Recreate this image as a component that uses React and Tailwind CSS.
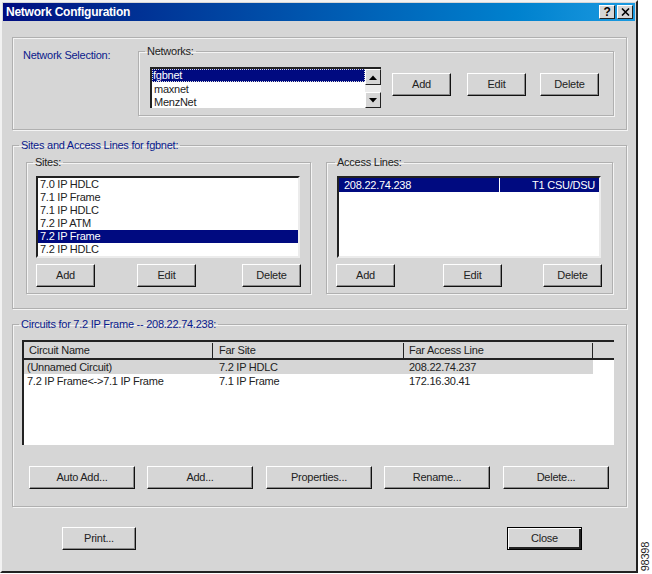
const FONT = "font-['Liberation_Sans',Arial,sans-serif]";

function Btn({ label, w = "w-[59px]", def = false, className = "" }) {
  return (
    <button
      className={`${w} h-[23px] shrink-0 bg-[#d6d6d6] text-[11px] leading-none text-[#222] border ${
        def
          ? "border-black shadow-[inset_1px_1px_0_#fff,inset_-2px_-2px_0_#222]"
          : "border-t-white border-l-white border-r-[#111] border-b-[#111] shadow-[inset_-1px_-1px_0_#8a8a8a]"
      } ${className}`}
    >
      {label}
    </button>
  );
}

function Group({ title, blue = false, legend = "ml-[7px]", className = "", children }) {
  return (
    <fieldset
      className={`border border-[#b0b0b0] shadow-[1px_1px_0_#f4f4f4,inset_1px_1px_0_#f4f4f4] ${className}`}
    >
      <legend
        className={`${legend} px-[2px] text-[11px] leading-[14px] ${blue ? "text-[#0a1a8c]" : "text-[#222]"}`}
      >
        {title}
      </legend>
      {children}
    </fieldset>
  );
}

function Row({ text, selected = false, className = "" }) {
  return (
    <div
      className={`h-[13px] leading-[13px] px-[2px] text-[11px] ${
        selected ? "bg-[#000a80] text-white" : "text-[#222]"
      } ${className}`}
    >
      {text}
    </div>
  );
}

const sunken =
  "bg-white border-t-2 border-l-2 border-t-[#222] border-l-[#222] border-r-2 border-b-2 border-r-[#ececec] border-b-[#ececec]";

function ScrollArrow({ up }) {
  return (
    <div className="w-[16px] h-[16px] bg-[#d6d6d6] border border-t-white border-l-white border-r-[#222] border-b-[#222] flex items-center justify-center">
      <svg width="8" height="5" viewBox="0 0 8 5">
        <path d={up ? "M0 5 L4 0.5 L8 5 Z" : "M0 0 L4 4.5 L8 0 Z"} fill="#000" />
      </svg>
    </div>
  );
}

const columns = [
  ["Circuit Name", "w-[189px] pl-[5px]"],
  ["Far Site", "w-[191px] pl-[6px]"],
  ["Far Access Line", "w-[189px] pl-[5px]"],
];

const circuits = [
  ["(Unnamed Circuit)", "7.2 IP HDLC", "208.22.74.237"],
  ["7.2 IP Frame<->7.1 IP Frame", "7.1 IP Frame", "172.16.30.41"],
];

export default function App() {
  return (
    <div className={`${FONT} tracking-[-0.25px] w-[652px] h-[574px] bg-white flex`}>
      <div className="w-[638px] h-[573px] shrink-0 bg-[#d6d6d6] border-l-[2px] border-t-[2px] border-l-[#f2f2f2] border-t-[#f2f2f2] border-r-[2px] border-b-[2px] border-r-[#222] border-b-[#222] flex flex-col">
        <div className="mx-px mt-px h-[18px] shrink-0 bg-gradient-to-r from-[#000a80] to-[#1a9ae0] flex items-center pl-[3px] pr-[2px]">
          <span className="flex-1 text-white font-bold text-[12px] leading-none">Network Configuration</span>
          <div className="w-[16px] h-[14px] mr-[2px] bg-[#d6d6d6] border border-t-white border-l-white border-r-[#222] border-b-[#222] flex items-center justify-center font-bold text-[12px] leading-none text-black">?</div>
          <div className="w-[16px] h-[14px] bg-[#d6d6d6] border border-t-white border-l-white border-r-[#222] border-b-[#222] flex items-center justify-center">
            <svg width="9" height="8" viewBox="0 0 9 8">
              <path d="M1 0.5 L8 7.5 M8 0.5 L1 7.5" stroke="#000" strokeWidth="1.6" />
            </svg>
          </div>
        </div>

        <div className="flex-1 flex flex-col pl-[10px] pr-[9px]">
          {/* Network selection */}
          <div className="mt-[16px] h-[93px] border border-[#b0b0b0] shadow-[1px_1px_0_#f4f4f4,inset_1px_1px_0_#f4f4f4] flex">
            <div className="w-[125px] shrink-0 pl-[10px] pt-[10px] text-[11px] leading-[14px] text-[#0a1a8c]">Network Selection:</div>
            <Group title="Networks:" legend="-ml-[5px]" className="w-[476px] h-[72px] mt-[6px] pl-[11px] pr-[12px]">
              <div className="flex items-start mt-[9px]">
                <div className="w-[231px] h-[41px] shrink-0 border-l-2 border-t-2 border-l-[#222] border-t-[#222] bg-white flex">
                  <div className="flex-1 min-w-0">
                    <div className="h-[13px] leading-[12px] px-[1px] text-[11px] bg-[#000a80] text-white outline-1 -outline-offset-1 outline-dotted outline-[#ddd]">fgbnet</div>
                    <Row text="maxnet" className="mt-[1px]" />
                    <Row text="MenzNet" />
                  </div>
                  <div className="w-[16px] shrink-0 bg-[#ececec] flex flex-col justify-between">
                    <ScrollArrow up />
                    <ScrollArrow />
                  </div>
                </div>
                <div className="flex ml-[11px] mt-[6px]">
                  <Btn label="Add" />
                  <Btn label="Edit" className="ml-[16px]" />
                  <Btn label="Delete" className="ml-[14px]" />
                </div>
              </div>
            </Group>
          </div>

          {/* Sites and access lines */}
          <Group title="Sites and Access Lines for fgbnet:" blue legend="ml-[6px]" className="mt-[8px] h-[171px] flex">
            <div className="flex pl-[13px] pt-[3px]">
              <Group title="Sites:" legend="-ml-[3px]" className="w-[285px] h-[139px] pl-[9px] pr-[9px]">
                <div className={`${sunken} w-[264px] h-[82px] mt-[7px] overflow-hidden`}>
                  <Row text="7.0 IP HDLC" />
                  <Row text="7.1 IP Frame" />
                  <Row text="7.1 IP HDLC" />
                  <Row text="7.2 IP ATM" />
                  <Row text="7.2 IP Frame" selected />
                  <Row text="7.2 IP HDLC" />
                </div>
                <div className="flex mt-[6px]">
                  <Btn label="Add" />
                  <Btn label="Edit" className="ml-[42px]" />
                  <Btn label="Delete" className="ml-[46px]" />
                </div>
              </Group>
              <Group title="Access Lines:" legend="-ml-[2px]" className="w-[287px] h-[139px] ml-[15px] pl-[10px] pr-[9px]">
                <div className={`${sunken} w-[264px] h-[82px] mt-[7px]`}>
                  <div className="h-[14px] leading-[14px] text-[11px] bg-[#000a80] text-white flex pl-[5px] pr-[4px]">
                    <span className="w-[156px] border-r border-r-white">208.22.74.238</span>
                    <span className="flex-1 text-right">T1 CSU/DSU</span>
                  </div>
                </div>
                <div className="flex -ml-px mt-[6px]">
                  <Btn label="Add" />
                  <Btn label="Edit" className="ml-[48px]" />
                  <Btn label="Delete" className="ml-[41px]" />
                </div>
              </Group>
            </div>
          </Group>

          {/* Circuits */}
          <Group title="Circuits for 7.2 IP Frame -- 208.22.74.238:" blue legend="-ml-[3px]" className="mt-[8px] h-[190px] pl-[9px]">
            <div className="w-[592px] h-[105px] mt-[9px] bg-white border-l-2 border-l-[#222] border-t-2 border-t-[#222] flex flex-col">
              <div className="h-[18px] shrink-0 bg-[#d6d6d6] border-b-2 border-b-[#222] flex text-[11px] leading-[15px] text-[#222] pt-px">
                {columns.map(([name, w]) => (
                  <div key={name} className={`${w} border-r border-r-[#222]`}>{name}</div>
                ))}
                <div className="flex-1" />
              </div>
              <div>
                {circuits.map((c, i) => (
                  <div key={c[0]} className={`w-[569px] h-[14px] flex text-[11px] leading-[14px] text-[#222] ${i === 0 ? "bg-[#d6d6d6]" : ""}`}>
                    <span className="w-[189px] pl-[3px]">{c[0]}</span>
                    <span className="w-[191px] pl-[6px]">{c[1]}</span>
                    <span className="w-[189px] pl-[5px]">{c[2]}</span>
                  </div>
                ))}
              </div>
            </div>
            <div className="flex ml-[7px] mt-[21px]">
              <Btn label="Auto Add..." w="w-[106px]" />
              <Btn label="Add..." w="w-[106px]" className="ml-[12px]" />
              <Btn label="Properties..." w="w-[106px]" className="ml-[13px]" />
              <Btn label="Rename..." w="w-[106px]" className="ml-[12px]" />
              <Btn label="Delete..." w="w-[106px]" className="ml-[13px]" />
            </div>
          </Group>

          {/* Footer */}
          <div className="flex justify-between pl-[50px] pr-[45px] mt-[20px]">
            <Btn label="Print..." w="w-[74px]" />
            <Btn label="Close" w="w-[75px]" def />
          </div>
        </div>
      </div>
      <div className="flex-1 flex items-end justify-center pb-[3px]">
        <span className="[writing-mode:vertical-rl] rotate-180 text-[11px] leading-none text-[#222]">98398</span>
      </div>
    </div>
  );
}
